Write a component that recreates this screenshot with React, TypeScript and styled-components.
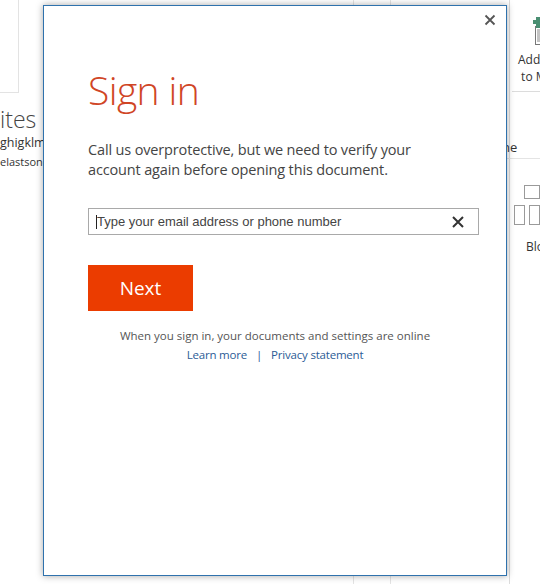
import React from "react";
import styled, { createGlobalStyle } from "styled-components";

const Global = createGlobalStyle`
  html, body { margin: 0; padding: 0; background: #fff; }
  body { width: 540px; height: 584px; overflow: hidden; font-family: "Open Sans", "Noto Sans", sans-serif; }
  #root { width: 540px; height: 584px; }
`;

const Page = styled.div`
  position: relative;
  width: 540px;
  height: 584px;
  display: flex;
  background: #fff;
  overflow: hidden;
`;

const LeftCol = styled.div`
  width: 40px;
  display: flex;
  flex-direction: column;
`;

const Thumb = styled.div`
  width: 19px;
  height: 93px;
  border: 1px solid #e3e3e3;
  border-top: none;
  border-left: none;
  box-sizing: border-box;
`;

const Heading = styled.div`
  margin-top: 10px;
  margin-bottom: -2px;
  font-family: "Open Sans", sans-serif;
  font-weight: 300;
  font-size: 23px;
  color: #444;
  white-space: nowrap;
`;

const SubLine = styled.div<{ $size: number }>`
  font-family: "Open Sans", sans-serif;
  font-size: ${(p) => p.$size}px;
  line-height: ${(p) => p.$size + 7}px;
  color: #333;
  white-space: nowrap;
`;

const Middle = styled.div`
  flex: 1;
  display: flex;
  justify-content: flex-end;
`;

const Sep = styled.div<{ $w: number }>`
  width: ${(p) => p.$w}px;
  border-left: 1px solid #e4e4e4;
`;

const RightPanel = styled.div`
  width: 31px;
  border-left: 1px solid #dcdcdc;
  display: flex;
  flex-direction: column;
  padding-left: 2px;
  box-sizing: border-box;
`;

const AddBtn = styled.div`
  height: 92px;
  border-bottom: 1px solid #dcdcdc;
  display: flex;
  flex-direction: column;
  align-items: flex-start;
  padding: 17px 0 0 6px;
  box-sizing: border-box;
  font-family: "Open Sans", sans-serif;
  font-size: 12px;
  line-height: 17px;
  color: #333;
  white-space: nowrap;
`;

const AddIcon = styled.svg`
  margin-left: 12px;
  margin-bottom: 6px;
`;

const Section = styled.div`
  height: 67px;
  border-bottom: 1px solid #e4e4e4;
  font-family: "Open Sans", sans-serif;
  font-size: 13px;
  color: #333;
  display: flex;
  align-items: flex-end;
  padding-bottom: 2px;
  box-sizing: border-box;
  white-space: nowrap;
  margin-left: -10px;
`;

const Layouts = styled.div`
  display: flex;
  flex-direction: column;
  padding-top: 26px;
  gap: 6px;
  font-family: "Open Sans", sans-serif;
  font-size: 12px;
  color: #333;
  white-space: nowrap;
`;

const LayoutBox = styled.div<{ $w: number; $h: number }>`
  width: ${(p) => p.$w}px;
  height: ${(p) => p.$h}px;
  border: 1px solid #9a9a9a;
  box-sizing: border-box;
`;

const LayoutRow = styled.div<{ $pad: number }>`
  display: flex;
  gap: 4px;
  padding-left: ${(p) => p.$pad}px;
`;

const BloText = styled.div`
  margin-top: 7px;
  padding-left: 14px;
`;

const Dialog = styled.div`
  position: absolute;
  left: 43px;
  top: 5px;
  width: 464px;
  height: 571px;
  box-sizing: border-box;
  background: #fff;
  border: 1px solid #2f72ad;
  box-shadow: 0 0 7px rgba(0, 0, 0, 0.35);
  display: flex;
  flex-direction: column;
  padding: 58px 27px 0 44px;
`;

const CloseBtn = styled.div`
  position: absolute;
  right: 10px;
  top: 8px;
  width: 12px;
  height: 12px;
  display: flex;
`;

const Title = styled.h1`
  margin: 0;
  font-family: "Open Sans", sans-serif;
  font-weight: 300;
  font-size: 39px;
  line-height: 52px;
  color: #d04525;
  letter-spacing: -0.6px;
`;

const Para = styled.p`
  margin: 24px 0 0;
  font-family: "Open Sans", sans-serif;
  font-size: 14.5px;
  line-height: 20px;
  color: #444;
  letter-spacing: -0.15px;
`;

const InputBox = styled.div`
  margin-top: 28px;
  height: 27px;
  border: 1px solid #a9a9a9;
  box-sizing: border-box;
  display: flex;
  align-items: center;
  padding: 0 14px 0 7px;
`;

const Caret = styled.span`
  width: 1px;
  height: 14px;
  background: #222;
`;

const Placeholder = styled.span`
  flex: 1;
  font-family: "Liberation Sans", Arial, sans-serif;
  font-size: 13px;
  color: #444;
`;

const NextBtn = styled.button`
  margin-top: 30px;
  width: 105px;
  height: 46px;
  border: none;
  background: #eb3c00;
  color: #fff;
  font-family: "Open Sans", sans-serif;
  font-size: 19px;
  padding: 0;
  cursor: pointer;
`;

const Footer = styled.div`
  margin-top: 15px;
  margin-right: 17px;
  display: flex;
  flex-direction: column;
  align-items: center;
  font-family: "Open Sans", sans-serif;
  font-size: 11.5px;
  line-height: 19px;
  color: #555;
`;

const Links = styled.div`
  display: flex;
  gap: 9px;
  color: #2c5c96;
  letter-spacing: -0.2px;
`;

const Link = styled.a`
  color: #2c5c96;
  text-decoration: none;
`;

export default function App() {
  return (
    <>
      <Global />
      <Page>
        <LeftCol>
          <Thumb />
          <Heading>ites</Heading>
          <SubLine $size={12.5}>ghigklm</SubLine>
          <SubLine $size={11}>elastsone</SubLine>
        </LeftCol>
        <Middle>
          <Sep $w={36} />
          <Sep $w={118} />
        </Middle>
        <RightPanel>
          <AddBtn>
            <AddIcon width="20" height="28" viewBox="0 0 20 28">
              <rect x="5.5" y="9.5" width="14" height="18" fill="#fff" stroke="#777" strokeWidth="1" />
              <rect x="7" y="12" width="3" height="13" fill="#c4c4c4" />
              <rect x="6" y="0" width="4" height="11" fill="#4a8f72" />
              <rect x="3" y="3" width="11" height="4" fill="#4a8f72" />
            </AddIcon>
            <span>Add</span>
            <span>&nbsp;to M</span>
          </AddBtn>
          <Section>ne</Section>
          <Layouts>
            <LayoutRow $pad={12}>
              <LayoutBox $w={20} $h={14} />
            </LayoutRow>
            <LayoutRow $pad={2}>
              <LayoutBox $w={14} $h={20} />
              <LayoutBox $w={14} $h={20} />
            </LayoutRow>
            <BloText>Blo</BloText>
          </Layouts>
        </RightPanel>
        <Dialog>
          <CloseBtn>
            <svg width="12" height="12" viewBox="0 0 12 12">
              <path d="M1.5 1.5 L10.5 10.5 M10.5 1.5 L1.5 10.5" stroke="#555" strokeWidth="1.8" />
            </svg>
          </CloseBtn>
          <Title>Sign in</Title>
          <Para>
            Call us overprotective, but we need to verify your
            <br />
            account again before opening this document.
          </Para>
          <InputBox>
            <Caret />
            <Placeholder>Type your email address or phone number</Placeholder>
            <svg width="12" height="12" viewBox="0 0 12 12">
              <path d="M1 1 L11 11 M11 1 L1 11" stroke="#333" strokeWidth="2" />
            </svg>
          </InputBox>
          <NextBtn>Next</NextBtn>
          <Footer>
            <span>When you sign in, your documents and settings are online</span>
            <Links>
              <Link href="#">Learn more</Link>
              <span>|</span>
              <Link href="#">Privacy statement</Link>
            </Links>
          </Footer>
        </Dialog>
      </Page>
    </>
  );
}
